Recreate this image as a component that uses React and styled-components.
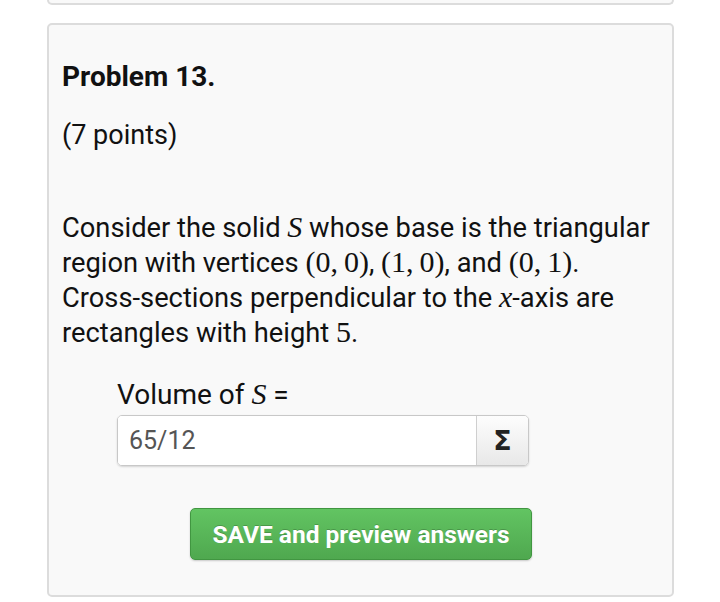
import styled, { createGlobalStyle } from "styled-components"

const Global = createGlobalStyle`
  body {
    margin: 0;
    background: #fff;
    font-family: Roboto, "Liberation Sans", sans-serif;
    color: #111;
  }
`

const Page = styled.div`
  padding: 0 46px 0 47px;
  width: 720px;
  box-sizing: border-box;
`

const PrevCard = styled.div`
  height: 3px;
  border: 2px solid #dcdcdc;
  border-top: none;
  border-radius: 0 0 5px 5px;
  background: #f9f9f9;
`

const Card = styled.div`
  margin-top: 18px;
  border: 2px solid #dcdcdc;
  border-radius: 5px;
  background: #f9f9f9;
  padding: 36px 13px 36px 13px;
  height: 574px;
  box-sizing: border-box;
`

const Title = styled.h3`
  margin: 0;
  font-size: 28px;
  font-weight: 700;
  line-height: 32px;
`

const Points = styled.p`
  margin: 26px 0 0;
  font-size: 27px;
  line-height: 32px;
`

const Text = styled.p`
  margin: 60px 0 0;
  font-size: 27.3px;
  line-height: 35px;
`

const M = styled.span`
  font-family: "Liberation Serif", "DejaVu Serif", serif;
  font-size: 30px;
  line-height: 1;
  font-style: ${(p) => (p.$italic ? "italic" : "normal")};
`

const NoWrap = styled.span`
  white-space: nowrap;
`

const Answer = styled.div`
  margin: 28px 0 0 55px;
`

const Label = styled.div`
  font-size: 28px;
  line-height: 32px;
`

const Field = styled.div`
  margin-top: 4px;
  display: flex;
  width: 412px;
  height: 51px;
  border: 1px solid #c8c8c8;
  border-radius: 5px;
  box-shadow: 0 1px 2px rgba(0, 0, 0, 0.15);
  overflow: hidden;
  box-sizing: border-box;
`

const Input = styled.div`
  flex: 1;
  background: #fff;
  display: flex;
  align-items: center;
  padding-left: 11px;
  font-size: 25px;
  color: #555;
`

const Sigma = styled.div`
  width: 51px;
  border-left: 1px solid #cfcfcf;
  background: linear-gradient(#fdfdfd, #e8e8e8);
  display: flex;
  align-items: center;
  justify-content: center;
  font-family: "DejaVu Sans", sans-serif;
  font-weight: 700;
  font-size: 27px;
  color: #222;
`

const Actions = styled.div`
  margin-top: 42px;
  display: flex;
  padding-left: 128px;
`

const Button = styled.button`
  width: 342px;
  height: 52px;
  border: 1px solid #419641;
  border-radius: 5px;
  background: linear-gradient(#62c462, #4fa84f);
  box-shadow: 0 1px 2px rgba(0, 0, 0, 0.2);
  color: #fff;
  font-family: Roboto, "Liberation Sans", sans-serif;
  font-size: 24.5px;
  font-weight: 700;
  text-shadow: 0 -1px 0 rgba(0, 0, 0, 0.2);
  padding: 0;
`

export default function App() {
  return (
    <Page>
      <Global />
      <PrevCard />
      <Card>
        <Title>Problem 13.</Title>
        <Points>(7 points)</Points>
        <Text>
          Consider the solid <M $italic>S</M> whose base is the triangular region with vertices{" "}
          <M>(0,&thinsp;0)</M>, <M>(1,&thinsp;0)</M>, and <M>(0,&thinsp;1)</M>.{" "}
          <NoWrap>Cross-sections</NoWrap> perpendicular to the <M $italic>x</M>-axis are
          rectangles with height <M>5</M>.
        </Text>
        <Answer>
          <Label>
            Volume of <M $italic>S</M> =
          </Label>
          <Field>
            <Input>65/12</Input>
            <Sigma>Σ</Sigma>
          </Field>
        </Answer>
        <Actions>
          <Button>SAVE and preview answers</Button>
        </Actions>
      </Card>
    </Page>
  )
}
